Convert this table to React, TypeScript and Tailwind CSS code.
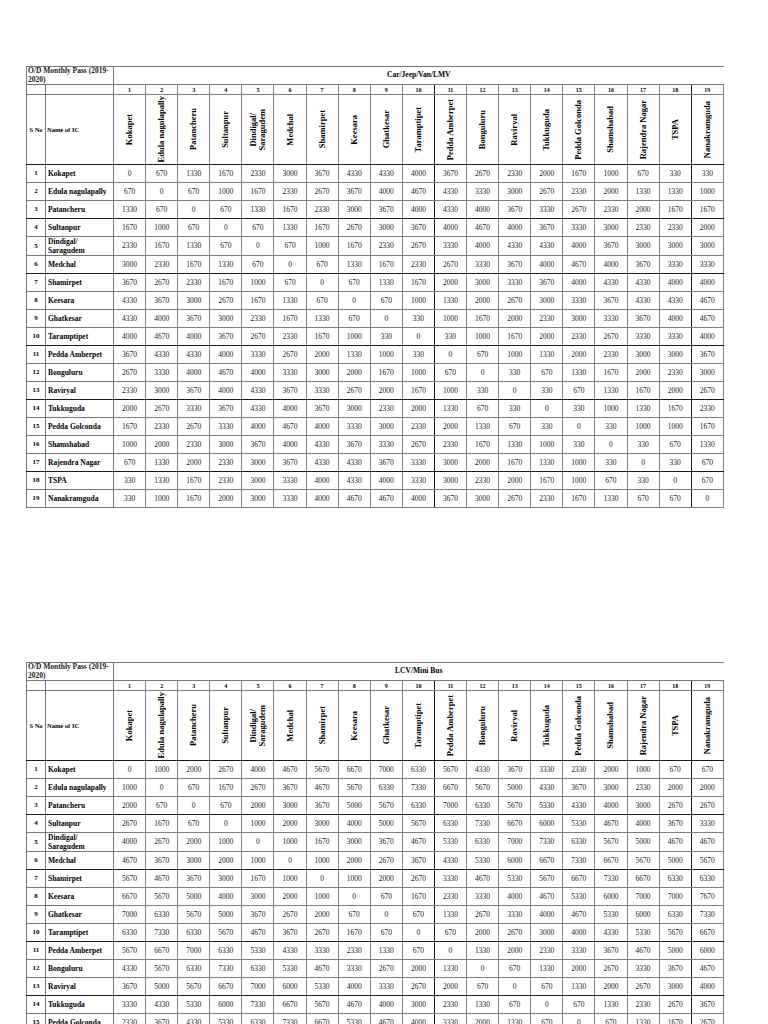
import React from "react";

const places = [
  "Kokapet",
  "Edula nagulapally",
  "Patancheru",
  "Sultanpur",
  "Dindigal/ Saragudem",
  "Medchal",
  "Shamirpet",
  "Keesara",
  "Ghatkesar",
  "Taramptipet",
  "Pedda Amberpet",
  "Bonguluru",
  "Raviryal",
  "Tukkuguda",
  "Pedda Golconda",
  "Shamshabad",
  "Rajendra Nagar",
  "TSPA",
  "Nanakramguda",
];

const carFares = [
  [0, 670, 1330, 1670, 2330, 3000, 3670, 4330, 4330, 4000, 3670, 2670, 2330, 2000, 1670, 1000, 670, 330, 330],
  [670, 0, 670, 1000, 1670, 2330, 2670, 3670, 4000, 4670, 4330, 3330, 3000, 2670, 2330, 2000, 1330, 1330, 1000],
  [1330, 670, 0, 670, 1330, 1670, 2330, 3000, 3670, 4000, 4330, 4000, 3670, 3330, 2670, 2330, 2000, 1670, 1670],
  [1670, 1000, 670, 0, 670, 1330, 1670, 2670, 3000, 3670, 4000, 4670, 4000, 3670, 3330, 3000, 2330, 2330, 2000],
  [2330, 1670, 1330, 670, 0, 670, 1000, 1670, 2330, 2670, 3330, 4000, 4330, 4330, 4000, 3670, 3000, 3000, 3000],
  [3000, 2330, 1670, 1330, 670, 0, 670, 1330, 1670, 2330, 2670, 3330, 3670, 4000, 4670, 4000, 3670, 3330, 3330],
  [3670, 2670, 2330, 1670, 1000, 670, 0, 670, 1330, 1670, 2000, 3000, 3330, 3670, 4000, 4330, 4330, 4000, 4000],
  [4330, 3670, 3000, 2670, 1670, 1330, 670, 0, 670, 1000, 1330, 2000, 2670, 3000, 3330, 3670, 4330, 4330, 4670],
  [4330, 4000, 3670, 3000, 2330, 1670, 1330, 670, 0, 330, 1000, 1670, 2000, 2330, 3000, 3330, 3670, 4000, 4670],
  [4000, 4670, 4000, 3670, 2670, 2330, 1670, 1000, 330, 0, 330, 1000, 1670, 2000, 2330, 2670, 3330, 3330, 4000],
  [3670, 4330, 4330, 4000, 3330, 2670, 2000, 1330, 1000, 330, 0, 670, 1000, 1330, 2000, 2330, 3000, 3000, 3670],
  [2670, 3330, 4000, 4670, 4000, 3330, 3000, 2000, 1670, 1000, 670, 0, 330, 670, 1330, 1670, 2000, 2330, 3000],
  [2330, 3000, 3670, 4000, 4330, 3670, 3330, 2670, 2000, 1670, 1000, 330, 0, 330, 670, 1330, 1670, 2000, 2670],
  [2000, 2670, 3330, 3670, 4330, 4000, 3670, 3000, 2330, 2000, 1330, 670, 330, 0, 330, 1000, 1330, 1670, 2330],
  [1670, 2330, 2670, 3330, 4000, 4670, 4000, 3330, 3000, 2330, 2000, 1330, 670, 330, 0, 330, 1000, 1000, 1670],
  [1000, 2000, 2330, 3000, 3670, 4000, 4330, 3670, 3330, 2670, 2330, 1670, 1330, 1000, 330, 0, 330, 670, 1330],
  [670, 1330, 2000, 2330, 3000, 3670, 4330, 4330, 3670, 3330, 3000, 2000, 1670, 1330, 1000, 330, 0, 330, 670],
  [330, 1330, 1670, 2330, 3000, 3330, 4000, 4330, 4000, 3330, 3000, 2330, 2000, 1670, 1000, 670, 330, 0, 670],
  [330, 1000, 1670, 2000, 3000, 3330, 4000, 4670, 4670, 4000, 3670, 3000, 2670, 2330, 1670, 1330, 670, 670, 0],
];

const lcvFares = [
  [0, 1000, 2000, 2670, 4000, 4670, 5670, 6670, 7000, 6330, 5670, 4330, 3670, 3330, 2330, 2000, 1000, 670, 670],
  [1000, 0, 670, 1670, 2670, 3670, 4670, 5670, 6330, 7330, 6670, 5670, 5000, 4330, 3670, 3000, 2330, 2000, 2000],
  [2000, 670, 0, 670, 2000, 3000, 3670, 5000, 5670, 6330, 7000, 6330, 5670, 5330, 4330, 4000, 3000, 2670, 2670],
  [2670, 1670, 670, 0, 1000, 2000, 3000, 4000, 5000, 5670, 6330, 7330, 6670, 6000, 5330, 4670, 4000, 3670, 3330],
  [4000, 2670, 2000, 1000, 0, 1000, 1670, 3000, 3670, 4670, 5330, 6330, 7000, 7330, 6330, 5670, 5000, 4670, 4670],
  [4670, 3670, 3000, 2000, 1000, 0, 1000, 2000, 2670, 3670, 4330, 5330, 6000, 6670, 7330, 6670, 5670, 5000, 5670],
  [5670, 4670, 3670, 3000, 1670, 1000, 0, 1000, 2000, 2670, 3330, 4670, 5330, 5670, 6670, 7330, 6670, 6330, 6330],
  [6670, 5670, 5000, 4000, 3000, 2000, 1000, 0, 670, 1670, 2330, 3330, 4000, 4670, 5330, 6000, 7000, 7000, 7670],
  [7000, 6330, 5670, 5000, 3670, 2670, 2000, 670, 0, 670, 1330, 2670, 3330, 4000, 4670, 5330, 6000, 6330, 7330],
  [6330, 7330, 6330, 5670, 4670, 3670, 2670, 1670, 670, 0, 670, 2000, 2670, 3000, 4000, 4330, 5330, 5670, 6670],
  [5670, 6670, 7000, 6330, 5330, 4330, 3330, 2330, 1330, 670, 0, 1330, 2000, 2330, 3330, 3670, 4670, 5000, 6000],
  [4330, 5670, 6330, 7330, 6330, 5330, 4670, 3330, 2670, 2000, 1330, 0, 670, 1330, 2000, 2670, 3330, 3670, 4670],
  [3670, 5000, 5670, 6670, 7000, 6000, 5330, 4000, 3330, 2670, 2000, 670, 0, 670, 1330, 2000, 2670, 3000, 4000],
  [3330, 4330, 5330, 6000, 7330, 6670, 5670, 4670, 4000, 3000, 2330, 1330, 670, 0, 670, 1330, 2330, 2670, 3670],
  [2330, 3670, 4330, 5330, 6330, 7330, 6670, 5330, 4670, 4000, 3330, 2000, 1330, 670, 0, 670, 1330, 1670, 2670],
];

// rows whose bottom rule prints darker in the scanned pdf
const darkRows = [2, 5, 9, 12, 16];

function cellEdge(col: number, row: number) {
  const right = col === 9 || col === 17 ? "border-r-[#1a1a1a]" : "";
  const bottom = darkRows.includes(row) ? "border-b-[#1a1a1a]" : "";
  return `${right} ${bottom}`;
}

function FareTable({ vehicle, fares }: { vehicle: string; fares: number[][] }) {
  return (
    <table className="table-fixed border-collapse w-[698px] font-['Liberation_Serif',serif] text-black">
      <colgroup>
        <col className="w-[19px]" />
        <col className="w-[68px]" />
        {places.map((p) => (
          <col key={p} />
        ))}
      </colgroup>
      <tbody>
        <tr className="h-[18px]">
          <td
            colSpan={2}
            className="p-0 pl-px align-top border border-[#777] text-[7.5px] leading-[8.5px] font-bold text-[#222]"
          >
            O/D Monthly Pass (2019-2020)
          </td>
          <td
            colSpan={19}
            className="p-0 border-t border-b border-[#777] text-center align-top pt-[4px] text-[7.5px] leading-none font-bold"
          >
            {vehicle}
          </td>
        </tr>
        <tr className="h-[10px]">
          <td className="p-0 border border-[#777]" />
          <td className="p-0 border border-[#777]" />
          {places.map((p, i) => (
            <td
              key={p}
              className={`p-0 border border-[#808080] text-center text-[6px] leading-none font-bold ${cellEdge(i, -1)}`}
            >
              {i + 1}
            </td>
          ))}
        </tr>
        <tr className="h-[70px]">
          <td className="p-0 border border-[#777] border-b-[#1a1a1a] text-center text-[6.5px] font-bold whitespace-nowrap">
            S No
          </td>
          <td className="p-0 pl-px border border-[#777] border-b-[#1a1a1a] text-[6.5px] font-bold">
            Name of IC
          </td>
          {places.map((p, i) => (
            <td
              key={p}
              className={`p-0 border border-[#808080] border-b-[#1a1a1a] ${cellEdge(i, -1)}`}
            >
              <div className="flex items-center justify-center h-[68px]">
                <span className="[writing-mode:vertical-rl] rotate-180 text-[8.5px] leading-[9px] font-bold text-center whitespace-nowrap">
                  {p.includes("/") ? (
                    <>
                      Dindigal/
                      <br />
                      Saragudem
                    </>
                  ) : (
                    p
                  )}
                </span>
              </div>
            </td>
          ))}
        </tr>
        {fares.map((row, r) => (
          <tr key={r} className="h-[18px]">
            <td
              className={`p-0 border border-[#777] text-center text-[7px] font-bold ${cellEdge(-1, r)}`}
            >
              {r + 1}
            </td>
            <td
              className={`p-0 pl-[2px] border border-[#777] text-[7.5px] leading-[9px] font-bold whitespace-nowrap ${cellEdge(-1, r)}`}
            >
              {places[r].includes("/") ? (
                <>
                  Dindigal/
                  <br />
                  Saragudem
                </>
              ) : (
                places[r]
              )}
            </td>
            {row.map((v, c) => (
              <td
                key={c}
                className={`p-0 border border-[#808080] text-center text-[7.5px] text-[#222] ${cellEdge(c, r)}`}
              >
                {v}
              </td>
            ))}
          </tr>
        ))}
      </tbody>
    </table>
  );
}

export default function App() {
  return (
    <div className="h-[1024px] overflow-hidden bg-white pt-[66px] pl-[26px]">
      <FareTable vehicle="Car/Jeep/Van/LMV" fares={carFares} />
      <div className="mt-[154px]">
        <FareTable vehicle="LCV/Mini Bus" fares={lcvFares} />
      </div>
    </div>
  );
}
